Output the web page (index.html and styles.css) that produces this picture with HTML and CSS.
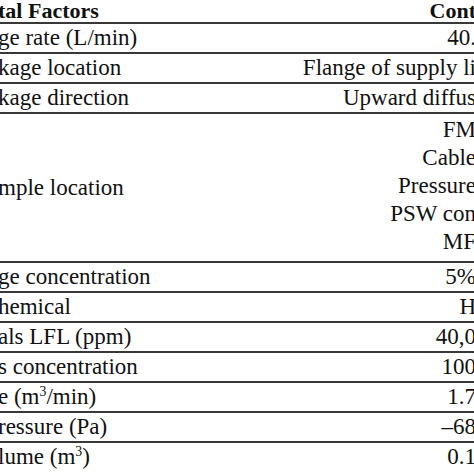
FILE: index.html
```html
<!DOCTYPE html>
<html>
<head>
<meta charset="utf-8">
<link rel="stylesheet" href="styles.css">
</head>
<body>
<div class="clip">
  <div class="table">
    <div class="row head">
      <div class="factor">tal Factors</div>
      <div class="cond">Cont</div>
    </div>
    <div class="row">
      <div class="factor">ge rate (L/min)</div>
      <div class="cond">40.</div>
    </div>
    <div class="row">
      <div class="factor">kage location</div>
      <div class="cond">Flange of supply li</div>
    </div>
    <div class="row">
      <div class="factor">kage direction</div>
      <div class="cond">Upward diffus</div>
    </div>
    <div class="row multi">
      <div class="factor">mple location</div>
      <div class="cond">
        <div class="line">FM</div>
        <div class="line">Cable</div>
        <div class="line">Pressure</div>
        <div class="line">PSW con</div>
        <div class="line">MF</div>
      </div>
    </div>
    <div class="row">
      <div class="factor">ge concentration</div>
      <div class="cond">5%</div>
    </div>
    <div class="row">
      <div class="factor">hemical</div>
      <div class="cond">H</div>
    </div>
    <div class="row">
      <div class="factor">als LFL (ppm)</div>
      <div class="cond">40,0</div>
    </div>
    <div class="row">
      <div class="factor">s concentration</div>
      <div class="cond">100</div>
    </div>
    <div class="row">
      <div class="factor">e (m<sup>3</sup>/min)</div>
      <div class="cond">1.7</div>
    </div>
    <div class="row">
      <div class="factor">ressure (Pa)</div>
      <div class="cond">–68</div>
    </div>
    <div class="row last">
      <div class="factor">lume (m<sup>3</sup>)</div>
      <div class="cond">0.1</div>
    </div>
  </div>
</div>
</body>
</html>
```

FILE: styles.css
```css
html, body {
  margin: 0;
  padding: 0;
  background: #ffffff;
}

.clip {
  width: 474px;
  height: 474px;
  overflow: hidden;
}

.table {
  display: flex;
  flex-direction: column;
  margin: 0 -2px 0 -2px;
  font-family: "Liberation Serif", "Times New Roman", serif;
  font-size: 23px;
  color: #111111;
}

.row {
  display: flex;
  justify-content: space-between;
  align-items: center;
  height: 28px;
  line-height: 28px;
  border-bottom: 2px solid #383838;
  white-space: nowrap;
}

.row.head {
  height: 22px;
  line-height: 22px;
  font-weight: bold;
  font-size: 22px;
}

.row.multi {
  height: 147px;
  align-items: stretch;
}

.row.multi .factor {
  display: flex;
  align-items: center;
}

.row.multi .cond {
  display: flex;
  flex-direction: column;
  align-items: flex-end;
  padding-top: 2px;
}

.line {
  height: 28px;
  line-height: 28px;
}

.row.last {
  border-bottom: none;
}

.factor {
  text-align: left;
}

.cond {
  text-align: right;
}

sup {
  font-size: 0.6em;
  line-height: 0;
  vertical-align: 0.6em;
}
```
